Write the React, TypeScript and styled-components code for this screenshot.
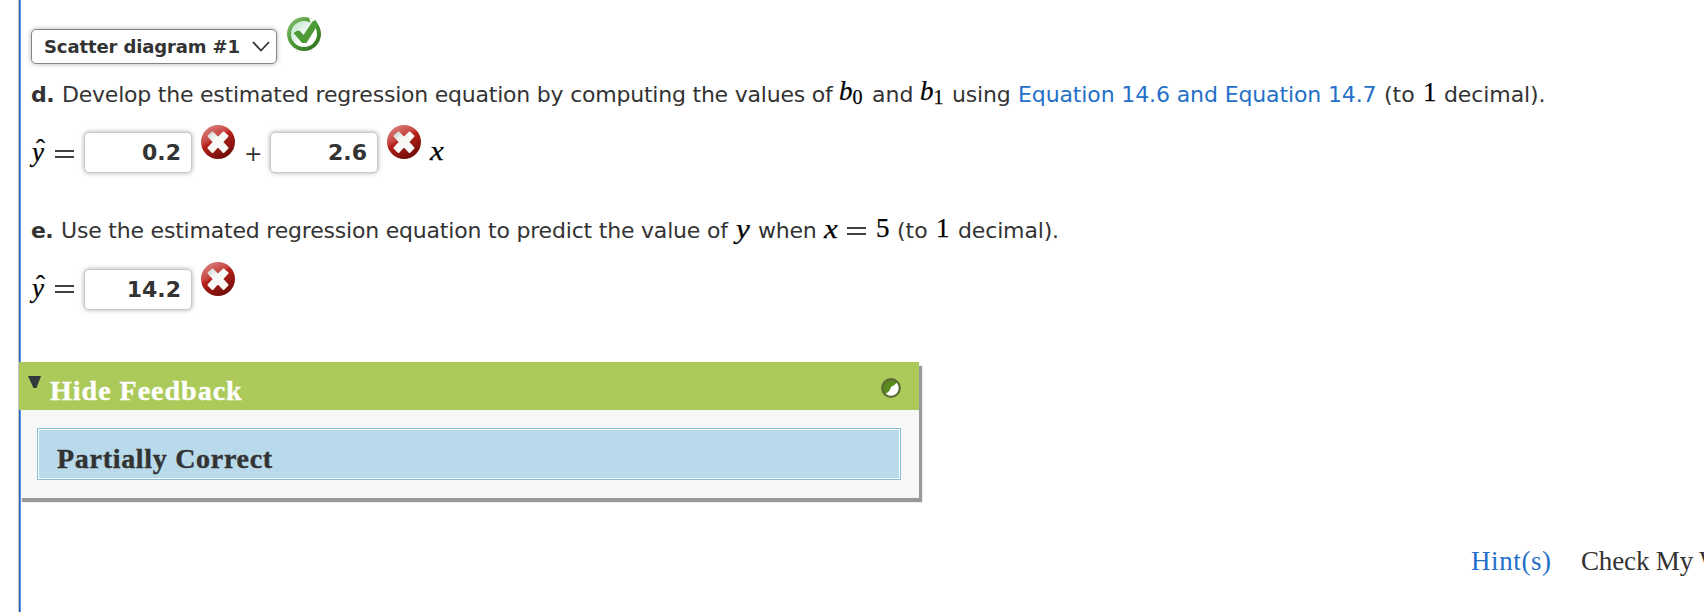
import React from "react";
import styled, { createGlobalStyle } from "styled-components";

const Global = createGlobalStyle`
  * { box-sizing: border-box; }
  body { margin: 0; background: #fff; overflow: hidden; }
`;

const Page = styled.main`
  display: flex;
  width: 1704px;
  height: 612px;
  padding-left: 18px;
  overflow: hidden;
  background: #fff;
  color: #333;
  font-family: Verdana, "DejaVu Sans", sans-serif;
  font-size: 22px;
`;

const Rule = styled.div`
  flex: none;
  width: 3px;
  border-left: 1px solid #c3c6cc;
  background: linear-gradient(90deg, #2a62c4 50%, #5d92dd 50%);
`;

const Content = styled.div`
  flex: none;
  width: 1683px;
  display: flex;
  flex-direction: column;
`;

const Row = styled.div<{ $h: number; $top?: number }>`
  display: flex;
  flex: none;
  height: ${(p) => p.$h}px;
  margin-top: ${(p) => p.$top ?? 0}px;
  padding-left: 10px;
  line-height: ${(p) => p.$h}px;
  white-space: pre;
`;

const Text = styled.span<{ $w: number; $ls?: number }>`
  flex: none;
  width: ${(p) => p.$w}px;
  letter-spacing: ${(p) => p.$ls ?? 0}px;
`;

const Label = styled(Text)`
  font-weight: bold;
`;

const Plus = styled(Text)`
  padding-left: 9px;
`;

const Link = styled(Text).attrs({ as: "a" })`
  color: #2470c8;
`;

const MathText = styled.span<{ $w: number; $italic?: boolean; $up?: number }>`
  flex: none;
  width: ${(p) => p.$w}px;
  margin-top: ${(p) => -(p.$up ?? 0)}px;
  color: #000;
  font-family: "Liberation Serif", serif;
  font-size: 27px;
  font-style: ${(p) => (p.$italic ? "italic" : "normal")};
  -webkit-text-stroke: 0.25px #000;

  sub {
    font-size: 20px;
    font-style: normal;
    line-height: 0;
    vertical-align: -4px;
  }
`;

const Variable = styled(MathText)<{ $gap?: number }>`
  margin-left: ${(p) => p.$gap ?? 0}px;
  transform: scaleX(1.15);
  transform-origin: left center;
`;

const Select = styled.button`
  display: flex;
  align-items: center;
  justify-content: space-between;
  width: 246px;
  height: 35px;
  margin: 12px 10px 0 0;
  padding: 0 6px 0 12px;
  border: 1px solid #858585;
  border-radius: 5px;
  background: #fff;
  box-shadow: 0 0 5px rgba(0, 0, 0, 0.3);
  color: #333;
  font: bold 18px/32px Verdana, "DejaVu Sans", sans-serif;
  letter-spacing: -0.12px;
  white-space: nowrap;
`;

const Answer = styled.div`
  flex: none;
  width: 108px;
  height: 41px;
  margin: 7px 9px 0 0;
  padding-right: 10px;
  border: 1px solid #c9c9c9;
  border-radius: 5px;
  background: #fff;
  box-shadow: 0 0 5px rgba(0, 0, 0, 0.32);
  font-weight: bold;
  line-height: 40px;
  text-align: right;
`;

const Mark = styled.svg`
  flex: none;
  display: block;
  width: 34px;
  height: 34px;
`;

const Panel = styled.section`
  width: 900px;
  height: 136px;
  margin: 46px 0 0 -2px;
  padding-left: 2px;
  box-shadow: 3px 4px 1px #999;
  background: linear-gradient(90deg, transparent 2px, #f7f7f7 2px);
  clip-path: inset(0 -10px -10px 0);
`;

const PanelHead = styled.header`
  display: flex;
  width: 900px;
  height: 48px;
  margin-left: -2px;
  padding-left: 9px;
  background: #abca5a;
  color: #fff;
  font: bold 28px/58px Georgia, "Liberation Serif", serif;
  -webkit-text-stroke: 0.4px #fff;
  white-space: nowrap;
`;

const Title = styled.span`
  flex: none;
  width: 782px;
  margin-left: 9px;
  letter-spacing: 1px;
`;

const Result = styled.div`
  width: 864px;
  height: 52px;
  margin: 18px 0 0 16px;
  padding-left: 19px;
  border: 1px solid #85bddb;
  box-shadow: inset 0 0 0 1px #fff;
  background: #b9daeb;
  font: bold 28px/60px Georgia, "Liberation Serif", serif;
  letter-spacing: 0.7px;
  -webkit-text-stroke: 0.4px #333;
`;

const Footer = styled.footer`
  display: flex;
  margin-top: 43px;
  padding-left: 1450px;
  font: 27px/40px Georgia, "Liberation Serif", serif;
  white-space: nowrap;
`;

const Correct = () => (
  <Mark viewBox="0 0 34 34">
    <defs>
      <linearGradient id="ring" x1="0" y1="0" x2="1" y2="1">
        <stop offset="0" stopColor="#8fc47c" />
        <stop offset="0.45" stopColor="#4d9a37" />
        <stop offset="1" stopColor="#2a6c1d" />
      </linearGradient>
      <linearGradient id="disc" x1="0" y1="0" x2="1" y2="1">
        <stop offset="0.1" stopColor="#c2e6cc" />
        <stop offset="0.6" stopColor="#fff" />
      </linearGradient>
    </defs>
    <circle cx="17" cy="17" r="17" fill="url(#ring)" />
    <circle cx="17" cy="17" r="13" fill="url(#disc)" />
    <path d="M22 1l6 2-4 4z" fill="#fff" />
    <path d="M6.500 16l4-2.500 2.500.5 3.500 4L25.500 4.500l3-1.500L31 7.500 19.500 26h-4.500z" fill="#4d9a37" />
  </Mark>
);

const Wrong = () => (
  <Mark viewBox="0 0 34 34">
    <defs>
      <linearGradient id="ball" x1="0.15" y1="0" x2="0.7" y2="1">
        <stop offset="0" stopColor="#d98785" />
        <stop offset="0.38" stopColor="#c8443f" />
        <stop offset="0.46" stopColor="#b5211a" />
        <stop offset="1" stopColor="#6d0b07" />
      </linearGradient>
      <linearGradient id="cross" x1="0" y1="0" x2="0.6" y2="0.7">
        <stop offset="0" stopColor="#ccd4cf" />
        <stop offset="0.5" stopColor="#f8f8f6" />
      </linearGradient>
    </defs>
    <circle cx="17" cy="17" r="17" fill="url(#ball)" />
    <path
      d="M7.500 11l4-3.500 5.500 5.500L22.500 7.500l4 3.500-5.500 6 5.500 6-4 4-5.500-6-5.500 6-4-4 5.500-6z"
      fill="url(#cross)"
      stroke="url(#cross)"
      strokeWidth="2"
      strokeLinejoin="round"
    />
  </Mark>
);

const Caret = () => (
  <svg width="18" height="11" viewBox="0 0 18 11">
    <path d="M1 1l8 8.500 8-8.500" fill="none" stroke="#333" strokeWidth="1.800" />
  </svg>
);

const Arrow = styled.svg`
  flex: none;
  width: 13px;
  height: 12px;
  margin-top: 14px;
`;

const Partial = styled.svg`
  flex: none;
  width: 20px;
  height: 20px;
  margin: 16px 0 0 49px;
`;

const EqualSign = styled.svg`
  flex: none;
  width: 19px;
  height: 8px;
  margin: 0 10px;
  align-self: center;
`;

const Equals = () => (
  <EqualSign viewBox="0 0 19 8">
    <path d="M0 1h19M0 7h19" stroke="#000" strokeWidth="1.300" />
  </EqualSign>
);

const YHat = styled(MathText)`
  position: relative;
  padding-left: 1px;

  &::after {
    content: "ˆ";
    position: absolute;
    left: 5px;
    top: -3px;
    font-style: normal;
  }
`;

export default function App() {
  return (
    <>
      <Global />
      <Page>
        <Rule />
        <Content>
          <Row $h={48} $top={17}>
            <Select>
              Scatter diagram #1 <Caret />
            </Select>
            <Correct />
          </Row>
          <Row $h={40} $top={10}>
            <Label $w={31} $ls={-0.6}>d.</Label>
            <Text $w={777} $ls={-0.22}>Develop the estimated regression equation by computing the values of</Text>
            <MathText $w={33} $italic $up={4}>b<sub>0</sub></MathText>
            <Text $w={48}>and</Text>
            <MathText $w={32} $italic $up={4}>b<sub>1</sub></MathText>
            <Text $w={66} $ls={-0.2}>using</Text>
            <Link $w={366} $ls={-0.12}>Equation 14.6 and Equation 14.7</Link>
            <Text $w={39}>(to</Text>
            <MathText $w={21} $up={3}>1</MathText>
            <Text $w={110} $ls={-0.1}>decimal).</Text>
          </Row>
          <Row $h={57} $top={10}>
            <YHat $w={14} $italic $up={1}>y</YHat>
            <Equals />
            <Answer>0.2</Answer>
            <Wrong />
            <Plus $w={35}>+</Plus>
            <Answer>2.6</Answer>
            <Wrong />
            <Variable $w={13} $gap={9} $italic $up={2}>x</Variable>
          </Row>
          <Row $h={40} $top={29}>
            <Label $w={30} $ls={-0.6}>e.</Label>
            <Text $w={675} $ls={-0.2}>Use the estimated regression equation to predict the value of</Text>
            <Variable $w={22} $italic $up={2}>y</Variable>
            <Text $w={66} $ls={-0.2}>when</Text>
            <Variable $w={13} $italic $up={2}>x</Variable>
            <Equals />
            <MathText $w={21} $up={3}>5</MathText>
            <Text $w={39}>(to</Text>
            <MathText $w={22} $up={3}>1</MathText>
            <Text $w={110} $ls={-0.15}>decimal).</Text>
          </Row>
          <Row $h={54} $top={11}>
            <YHat $w={14} $italic $up={1}>y</YHat>
            <Equals />
            <Answer>14.2</Answer>
            <Wrong />
          </Row>
          <Panel>
            <PanelHead>
              <Arrow viewBox="0 0 13 12">
                <path d="M0 0h13L8.500 12h-3z" fill="#30393b" />
              </Arrow>
              <Title>Hide Feedback</Title>
              <Partial viewBox="0 0 20 20">
                <circle cx="10" cy="10" r="9" fill="#fff" />
                <path d="M4 16A8.500 8.500 0 1 1 16.500 4Q14 7 10 9Q9 14 4 16z" fill="#5a8a1e" />
                <circle cx="10" cy="10" r="8.800" fill="none" stroke="#5c6b35" strokeWidth="2.200" />
              </Partial>
            </PanelHead>
            <Result>Partially Correct</Result>
          </Panel>
          <Footer>
            <Link $w={110} $ls={0.6}>Hint(s)</Link>
            <Text $w={200} $ls={-0.15}>Check My Work</Text>
          </Footer>
        </Content>
      </Page>
    </>
  );
}
